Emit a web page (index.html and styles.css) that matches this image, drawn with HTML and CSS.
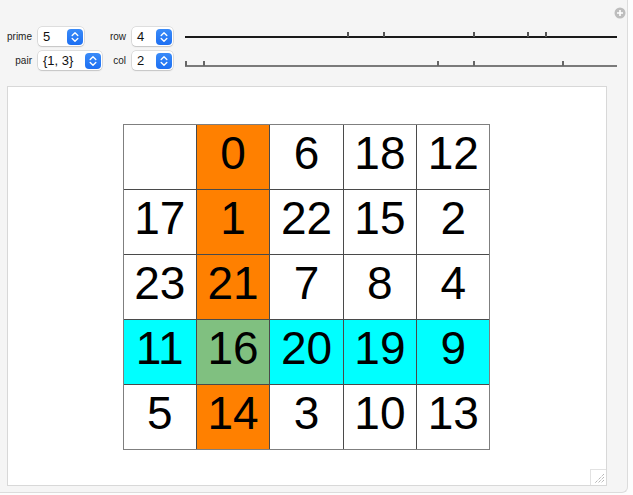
FILE: index.html
```html
<!DOCTYPE html>
<html>
<head>
<meta charset="utf-8">
<link rel="stylesheet" href="styles.css">
</head>
<body>
<div class="panel">
  <svg class="plus" width="12" height="12" viewBox="0 0 12 12"><circle cx="6" cy="6" r="5.5" fill="#bdbdbd"/><path d="M6 3v6M3 6h6" stroke="#fff" stroke-width="1.6"/></svg>
  <div class="controls">
    <span class="lbl">prime</span>
    <div class="pop w46"><span class="val">5</span><span class="btn"><svg width="16" height="16" viewBox="0 0 16 16"><path d="M5.2 6.4 8 3.8l2.8 2.6M5.2 9.6 8 12.2l2.8-2.6" fill="none" stroke="#fff" stroke-width="1.4" stroke-linecap="round" stroke-linejoin="round"/></svg></span></div>
    <span class="lbl">row</span>
    <div class="pop w41 ml"><span class="val">4</span><span class="btn"><svg width="16" height="16" viewBox="0 0 16 16"><path d="M5.2 6.4 8 3.8l2.8 2.6M5.2 9.6 8 12.2l2.8-2.6" fill="none" stroke="#fff" stroke-width="1.4" stroke-linecap="round" stroke-linejoin="round"/></svg></span></div>
    <div class="slider s1">
      <div class="track"></div>
      <i style="left:162px"></i><i style="left:198px"></i><i style="left:288px"></i><i style="left:342px"></i><i style="left:360px"></i>
    </div>
    <span class="lbl">pair</span>
    <div class="pop w64"><span class="val">{1, 3}</span><span class="btn"><svg width="16" height="16" viewBox="0 0 16 16"><path d="M5.2 6.4 8 3.8l2.8 2.6M5.2 9.6 8 12.2l2.8-2.6" fill="none" stroke="#fff" stroke-width="1.4" stroke-linecap="round" stroke-linejoin="round"/></svg></span></div>
    <span class="lbl">col</span>
    <div class="pop w41 ml"><span class="val">2</span><span class="btn"><svg width="16" height="16" viewBox="0 0 16 16"><path d="M5.2 6.4 8 3.8l2.8 2.6M5.2 9.6 8 12.2l2.8-2.6" fill="none" stroke="#fff" stroke-width="1.4" stroke-linecap="round" stroke-linejoin="round"/></svg></span></div>
    <div class="slider s2">
      <div class="track"></div>
      <i style="left:0px"></i><i style="left:18px"></i><i style="left:252px"></i><i style="left:288px"></i><i style="left:377px"></i>
    </div>
  </div>
  <div class="content">
    <div class="grid">
      <div class="c"></div><div class="c o">0</div><div class="c">6</div><div class="c">18</div><div class="c">12</div>
      <div class="c">17</div><div class="c o">1</div><div class="c">22</div><div class="c">15</div><div class="c">2</div>
      <div class="c">23</div><div class="c o">21</div><div class="c">7</div><div class="c">8</div><div class="c">4</div>
      <div class="c y">11</div><div class="c g">16</div><div class="c y">20</div><div class="c y">19</div><div class="c y">9</div>
      <div class="c">5</div><div class="c o">14</div><div class="c">3</div><div class="c">10</div><div class="c">13</div>
    </div>
    <svg class="grip" width="15" height="15" viewBox="0 0 15 15"><path d="M13 4 4 13M13 7 7 13M13 10 10 13" stroke="#9a9a9a" stroke-width="1" stroke-dasharray="1 1"/></svg>
  </div>
</div>
</body>
</html>
```
FILE: styles.css
```css
html, body { margin: 0; padding: 0; background: #fdfdfd; }
body { font-family: "Liberation Sans", Arial, sans-serif; }
.panel {
  position: relative;
  width: 627px;
  height: 492px;
  background: #f5f5f5;
  border-right: 1px solid #dcdcdc;
  border-bottom: 1px solid #dcdcdc;
  border-bottom-right-radius: 6px;
  display: flex;
  flex-direction: column;
}
.plus { position: absolute; left: 614px; top: 7px; }
.controls {
  display: grid;
  grid-template-columns: 32px 70px 24px 47px 1fr;
  grid-template-rows: 19px 19px;
  row-gap: 5px;
  padding: 27px 10px 0 0;
  align-items: center;
}
.lbl { font-size: 10px; color: #222; text-align: right; }
.pop {
  height: 19px;
  box-sizing: border-box;
  background: #fff;
  border-radius: 4px;
  box-shadow: 0 0 0 0.5px rgba(0,0,0,0.18), 0 1px 1.5px rgba(0,0,0,0.12);
  margin-left: 6px;
  display: flex;
  align-items: center;
  justify-content: space-between;
  padding: 0 1px 0 5px;
}
.w46 { width: 46px; }
.w64 { width: 64px; }
.w41 { width: 41px; }
.val { font-size: 13px; color: #111; }
.btn {
  width: 16px; height: 16px;
  border-radius: 4px;
  background: linear-gradient(#3a8bf8, #1d6ff2);
  display: flex;
}
.slider { position: relative; height: 19px; margin-left: 12px; }
.slider .track { position: absolute; left: 0; right: 0; }
.s1 .track { top: 9px; height: 1.5px; background: #1a1a1a; }
.s2 .track { top: 14px; height: 2px; background: #7a7a7a; }
.slider i { position: absolute; width: 1.5px; height: 5px; background: #555; }
.s1 i { top: 5px; }
.s2 i { top: 10px; height: 5px; background: #666; }
.content {
  position: relative;
  margin: 16px 20px 6px 7px;
  flex: 1;
  background: #fff;
  border: 1px solid #d8d8d8;
  display: flex;
  align-items: center;
  justify-content: center;
}
.grid {
  display: grid;
  grid-template-columns: repeat(5, 72.4px);
  grid-template-rows: repeat(5, 64px);
  gap: 1px;
  background: #4a4a4a;
  border: 1px solid #7f7f7f;
  margin-right: 1px;
  margin-top: 1px;
}
.c {
  background: #fff;
  font-size: 46px;
  color: #000;
  display: flex;
  align-items: center;
  justify-content: center;
  padding-bottom: 7px;
  box-sizing: border-box;
}
.o { background: #ff8000; }
.y { background: #00ffff; }
.g { background: #80c080; }
.grip { position: absolute; right: 0; bottom: 0; border-left: 1px solid #e2e2e2; border-top: 1px solid #e2e2e2; }
```
